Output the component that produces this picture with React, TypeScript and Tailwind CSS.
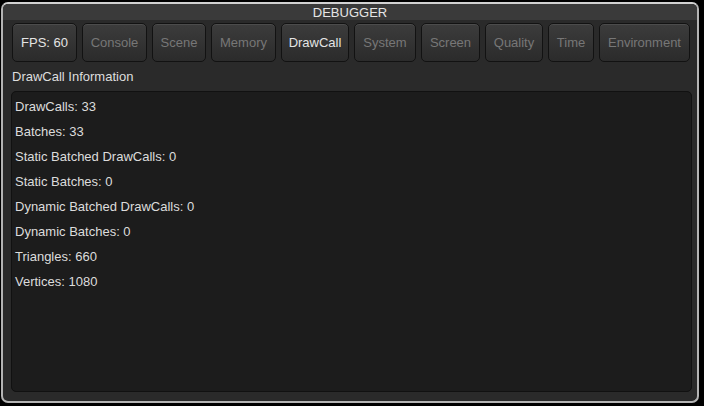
import React from "react";

const tabs: { label: string; w: number; active?: boolean }[] = [
  { label: "FPS: 60", w: 65, active: true },
  { label: "Console", w: 65 },
  { label: "Scene", w: 54 },
  { label: "Memory", w: 65 },
  { label: "DrawCall", w: 68, active: true },
  { label: "System", w: 62 },
  { label: "Screen", w: 59 },
  { label: "Quality", w: 58 },
  { label: "Time", w: 46 },
  { label: "Environment", w: 91 },
];

const lines = [
  "DrawCalls: 33",
  "Batches: 33",
  "Static Batched DrawCalls: 0",
  "Static Batches: 0",
  "Dynamic Batched DrawCalls: 0",
  "Dynamic Batches: 0",
  "Triangles: 660",
  "Vertices: 1080",
];

export default function App() {
  return (
    <div
      className="w-[704px] h-[406px] bg-black overflow-hidden pt-[2px] pl-[1px]"
      style={{ fontFamily: '"Liberation Sans", Arial, sans-serif' }}
    >
      <div className="w-[698px] h-[401px] rounded-[7px] border-2 border-[#b4b4b4] border-t-[#d2d2d2] bg-[#2a2a2a] flex flex-col overflow-hidden">
        <div className="h-[16px] pt-[1px] bg-[#3a3a3a] flex items-center justify-center text-[13px] leading-[16px] text-[#e6e6e6]">
          DEBUGGER
        </div>
        <div className="flex gap-[5px] pl-[9px] mt-[3px]">
          {tabs.map((t) => (
            <div
              key={t.label}
              style={{ width: t.w }}
              className={`h-[39px] shrink-0 rounded-[5px] border border-[#121212] bg-gradient-to-b from-[#3c3c3c] to-[#2b2b2b] shadow-[inset_0_1px_0_#4c4c4c] flex items-center justify-center text-[13px] ${
                t.active ? "text-[#e4e4e4]" : "text-[#777777]"
              }`}
            >
              {t.label}
            </div>
          ))}
        </div>
        <div className="mt-[7px] pl-[9px] h-[16px] leading-[16px] text-[13px] text-[#dedede]">
          DrawCall Information
        </div>
        <div className="mt-[6px] ml-[8px] w-[681px] h-[301px] rounded-[5px] border border-[#111111] bg-[#1c1c1c] pl-[3px] pt-[2px]">
          {lines.map((l) => (
            <div key={l} className="h-[25px] leading-[25px] text-[13px] text-[#dcdcdc]">
              {l}
            </div>
          ))}
        </div>
      </div>
    </div>
  );
}
